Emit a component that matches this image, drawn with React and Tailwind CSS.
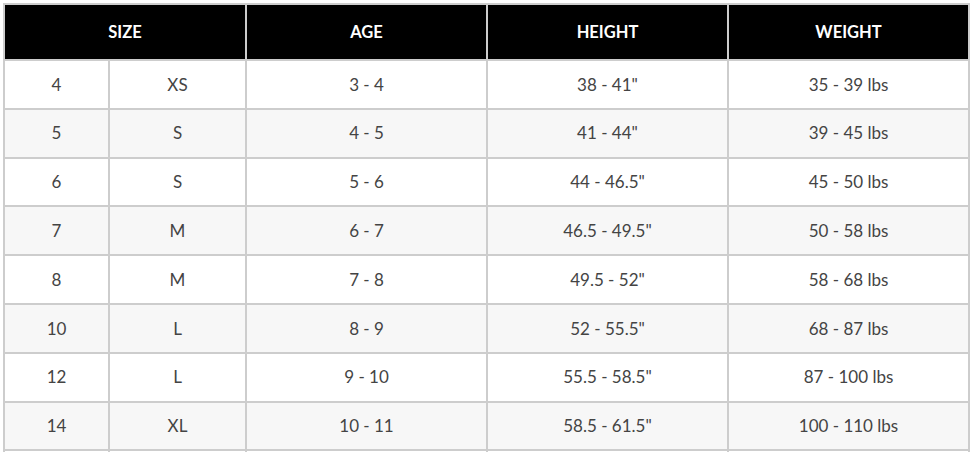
const rows = [
  ["4", "XS", "3 - 4", "38 - 41\"", "35 - 39 lbs"],
  ["5", "S", "4 - 5", "41 - 44\"", "39 - 45 lbs"],
  ["6", "S", "5 - 6", "44 - 46.5\"", "45 - 50 lbs"],
  ["7", "M", "6 - 7", "46.5 - 49.5\"", "50 - 58 lbs"],
  ["8", "M", "7 - 8", "49.5 - 52\"", "58 - 68 lbs"],
  ["10", "L", "8 - 9", "52 - 55.5\"", "68 - 87 lbs"],
  ["12", "L", "9 - 10", "55.5 - 58.5\"", "87 - 100 lbs"],
  ["14", "XL", "10 - 11", "58.5 - 61.5\"", "100 - 110 lbs"],
  ["", "", "", "", ""],
];

const SizeChart = () => {
  return (
    <div
      className="w-[972px] h-[452px] overflow-hidden bg-white pl-[3px] pt-[3px]"
      style={{ fontFamily: "Lato, 'Noto Sans', sans-serif" }}
    >
      <div className="grid grid-cols-[103px_135px_239px_239px_239px] grid-rows-[54px_repeat(9,46.8px)] gap-[2px] p-[2px] w-fit bg-[#cdcdcd]">
        {/* header */}
        <div className="col-span-2 bg-black text-white font-bold text-[16.5px] flex items-center justify-center">
          SIZE
        </div>
        <div className="bg-black text-white font-bold text-[16.5px] flex items-center justify-center">
          AGE
        </div>
        <div className="bg-black text-white font-bold text-[16.5px] flex items-center justify-center">
          HEIGHT
        </div>
        <div className="bg-black text-white font-bold text-[16.5px] flex items-center justify-center">
          WEIGHT
        </div>

        {rows.map((row, i) =>
          row.map((cell, j) => (
            <div
              key={i + "-" + j}
              className={
                "flex items-center justify-center text-[17px] text-[#444444] " +
                (i % 2 === 1 ? "bg-[#f7f7f7]" : "bg-white")
              }
            >
              {cell}
            </div>
          ))
        )}
      </div>
    </div>
  );
};

export default function App() {
  return <SizeChart />;
}
